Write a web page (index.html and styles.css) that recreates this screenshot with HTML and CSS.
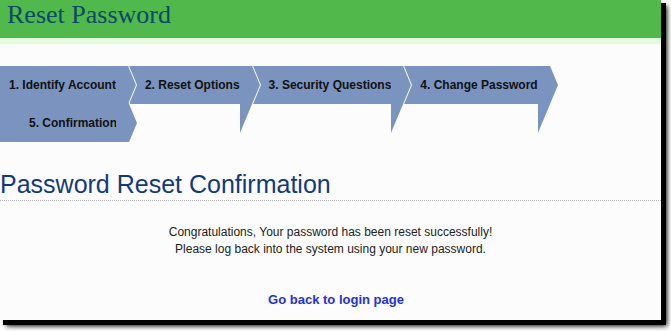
FILE: index.html
```html
<!DOCTYPE html>
<html>
<head>
    <meta charset="utf-8">
    <link rel="stylesheet" href="styles.css">
</head>
<body>
    <div class="window">
        <div class="header">
            <h1 class="title">Reset Password</h1>
        </div>

        <!-- Wizard steps -->
        <ul class="steps">
            <li class="step">1. Identify Account</li>
            <li class="step">2. Reset Options</li>
            <li class="step">3. Security Questions</li>
            <li class="step">4. Change Password</li>
            <li class="step">5. Confirmation</li>
        </ul>

        <h2 class="page-title">Password Reset Confirmation</h2>

        <div class="message">
            <p>Congratulations, Your password has been reset successfully!</p>
            <p>Please log back into the system using your new password.</p>
        </div>

        <div class="back">
            <a href="#" id="login-link">Go back to login page</a>
        </div>
    </div>
</body>
</html>
```

FILE: styles.css
```css
body {
    margin: 0;
    padding-bottom: 11px;
    background: #fff;
    font-family: "Liberation Sans", Arial, Helvetica, sans-serif;
}

.window {
    width: 661px;
    height: 320px;
    background: #fcfcfc;
    box-shadow: 4px 4px 0 1px #000, 6px 6px 5px #000;
    overflow: hidden;
}

.header {
    height: 38px;
    background: #51b84b;
    border-bottom: 6px solid #e6fce0;
}

.title {
    margin: 0;
    padding-left: 7px;
    font-family: "Liberation Serif", "Times New Roman", serif;
    font-size: 26px;
    font-weight: normal;
    line-height: 30px;
    color: #0c4868;
}

.steps {
    list-style: none;
    margin: 22px 0 0 0;
    padding: 0;
    width: 600px;
    display: flex;
    flex-wrap: wrap;
    overflow: hidden;
}

.step {
    position: relative;
    height: 38px;
    line-height: 38px;
    padding-left: 29px;
    background: #7a94bf;
    color: #111;
    font-size: 12px;
    font-weight: bold;
    white-space: nowrap;
}

.step:first-child {
    padding-left: 9px;
}

.step::after,
.step::before {
    content: '';
    position: absolute;
    top: 50%;
    left: 100%;
    margin-top: -48px;
    width: 0;
    height: 0;
    border-top: 48px solid transparent;
    border-bottom: 48px solid transparent;
    border-left: 20px solid #7a94bf;
    z-index: 2;
}

.step::before {
    border-left-color: #fff;
    margin-left: 1px;
    z-index: 1;
}

.page-title {
    margin: 27px 0 0 0;
    padding-bottom: 1px;
    font-size: 25px;
    font-weight: normal;
    line-height: 30px;
    color: #113a7a;
    border-bottom: 1px dotted #b5b5b5;
}

.message {
    margin-top: 23px;
    text-align: center;
    font-size: 12px;
    line-height: 17px;
    color: #222;
}

.message p {
    margin: 0;
}

.back {
    margin-top: 32px;
    text-align: center;
    line-height: 17px;
}

.back a {
    margin-left: 11px;
    font-size: 13px;
    font-weight: bold;
    color: #1f2fef;
    text-decoration: none;
}
```
